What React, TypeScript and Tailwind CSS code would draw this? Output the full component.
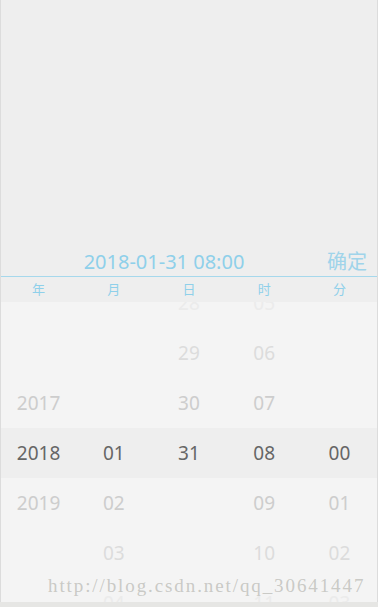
import React from 'react';

const font = { fontFamily: '"Noto Sans", "Noto Sans CJK SC", sans-serif' };

// each row: [年, 月, 日, 时, 分]; tone = how far from the selected row
const rows: { cells: string[]; tone: string }[] = [
    { cells: ['', '', '28', '05', ''], tone: 'text-[#ebebeb]' },
    { cells: ['', '', '29', '06', ''], tone: 'text-[#dcdcdc]' },
    { cells: ['2017', '', '30', '07', ''], tone: 'text-[#cdcdcd]' },
    { cells: ['2018', '01', '31', '08', '00'], tone: 'text-[#666666]' },
    { cells: ['2019', '02', '', '09', '01'], tone: 'text-[#cdcdcd]' },
    { cells: ['', '03', '', '10', '02'], tone: 'text-[#dcdcdc]' },
    { cells: ['', '04', '', '11', '03'], tone: 'text-[#ebebeb]' },
];

const labels = ['年', '月', '日', '时', '分'];

export default function App() {
    return (
        <div
            className="relative w-[378px] h-[607px] overflow-hidden bg-[#e6e6e4]"
            style={font}
        >
            <div className="flex flex-col h-[602px] bg-[#eeeeee] border-l border-r border-[#dcdcdc]">
                {/* empty page area */}
                <div className="h-[247px]" />

                {/* Header */}
                <div className="flex items-center h-[30px] border-b border-[#a6d8ec]">
                    <span className="flex-1 text-center text-[20px] text-[#8fd0ea]">
                        2018-01-31 08:00
                    </span>
                    <span className="pr-[10px] text-[20px] text-[#9fd4ea]">确定</span>
                </div>

                {/* Column labels */}
                <div className="grid grid-cols-5 h-[25px] items-center">
                    {labels.map((l) => (
                        <span key={l} className="text-center text-[13px] text-[#8fd0ea]">
                            {l}
                        </span>
                    ))}
                </div>

                {/* Wheels */}
                <div className="flex-1 overflow-hidden bg-[#f4f4f4]">
                    <div className="-mt-[24px]">
                        {rows.map((r, i) => (
                            <div
                                key={i}
                                className={`grid grid-cols-5 h-[50px] items-center ${i === 3 ? 'bg-[#eeeeee]' : ''}`}
                            >
                                {r.cells.map((c, j) => (
                                    <span key={j} className={`text-center text-[19px] ${r.tone}`}>
                                        {c}
                                    </span>
                                ))}
                            </div>
                        ))}
                    </div>
                </div>
            </div>

            {/* watermark */}
            <span
                className="absolute left-[48px] top-[576px] text-[19px] leading-none text-[#c4c4c0]/90 tracking-[1.9px] whitespace-nowrap"
                style={{ fontFamily: '"Liberation Serif", serif' }}
            >
                http://blog.csdn.net/qq_30641447
            </span>
        </div>
    );
}
